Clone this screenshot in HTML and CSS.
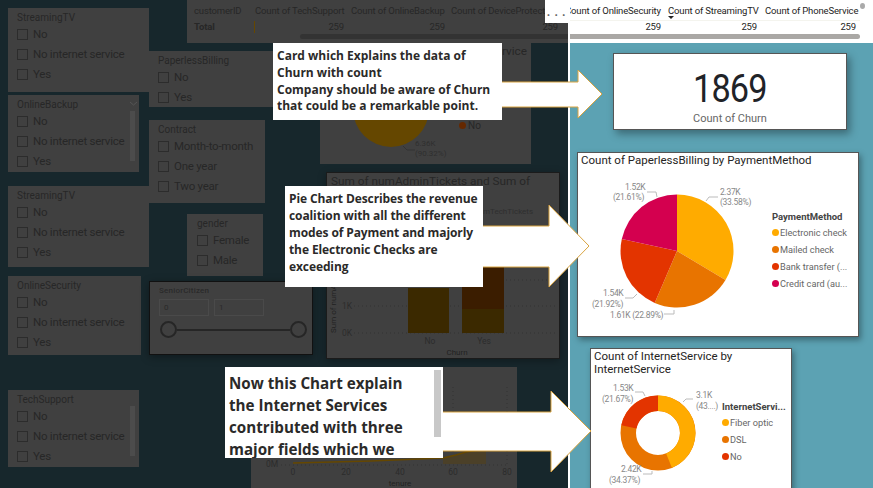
FILE: index.html
```html
<!DOCTYPE html>
<html lang="en">
<head>
<meta charset="utf-8">
<title>Churn dashboard</title>
<link rel="stylesheet" href="styles.css">
</head>
<body>
<div class="canvas">

  <section class="tile slicer s-stream1">
    <h3>StreamingTV</h3>
    <div class="opt"><i></i>No</div><div class="opt"><i></i>No internet service</div><div class="opt"><i></i>Yes</div>
  </section>
  <section class="tile slicer s-backup">
    <h3>OnlineBackup</h3>
    <svg class="chev" width="9" height="5" viewBox="0 0 9 5"><path d="M1 1l3.500 3L8 1" fill="none" stroke="#555"/></svg>
    <div class="opt"><i></i>No</div><div class="opt"><i></i>No internet service</div><div class="opt"><i></i>Yes</div>
    <b class="sbar"></b>
  </section>
  <section class="tile slicer s-stream2">
    <h3>StreamingTV</h3>
    <div class="opt"><i></i>No</div><div class="opt"><i></i>No internet service</div><div class="opt"><i></i>Yes</div>
  </section>
  <section class="tile slicer s-security">
    <h3>OnlineSecurity</h3>
    <div class="opt"><i></i>No</div><div class="opt"><i></i>No internet service</div><div class="opt"><i></i>Yes</div>
  </section>
  <section class="tile slicer s-support">
    <h3>TechSupport</h3>
    <div class="opt"><i></i>No</div><div class="opt"><i></i>No internet service</div><div class="opt"><i></i>Yes</div>
    <b class="sbar"></b>
  </section>
  <section class="tile slicer s-paperless">
    <h3>PaperlessBilling</h3>
    <div class="opt"><i></i>No</div><div class="opt"><i></i>Yes</div>
  </section>
  <section class="tile slicer s-contract">
    <h3>Contract</h3>
    <div class="opt"><i></i>Month-to-month</div><div class="opt"><i></i>One year</div><div class="opt"><i></i>Two year</div>
  </section>
  <section class="tile slicer s-gender">
    <h3>gender</h3>
    <div class="opt"><i></i>Female</div><div class="opt"><i></i>Male</div>
  </section>

  <section class="tile s-senior">
    <h4>SeniorCitizen</h4>
    <div class="inputs"><span>0</span><span>1</span></div>
    <div class="track"><u></u><s></s><u></u></div>
  </section>

  <section class="tile table-dark">
    <div class="hrow">
      <span class="c0">customerID</span><span class="c1">Count of TechSupport</span><span class="c2">Count of OnlineBackup</span><span class="c3">Count of DeviceProtect</span>
    </div>
    <div class="trow">
      <strong class="c0">Total</strong><span class="c1 num">259</span><span class="c2 num">259</span><span class="c3 num">259</span>
    </div>
    <b class="hscroll-dark"></b>
  </section>
  <div class="more">. . .</div>

  <section class="tile s-donutdark">
    <h2>rvice</h2>
    <svg class="darkpie" width="80" height="40" viewBox="0 0 80 40"><circle cx="40" cy="-1" r="38" fill="#654700"/></svg>
    <span class="darkdot"></span><span class="darkno">No</span>
    <span class="darklabel">6.36K<br>(90.32%)</span>
    <svg class="darklead" width="12" height="5" viewBox="0 0 12 5"><path d="M0 0l4 4h8" fill="none" stroke="#333"/></svg>
  </section>

  <section class="tile s-sum">
    <h2>Sum of numAdminTickets and Sum of</h2>
    <span class="sum-legend">mTechTickets</span>
    <svg class="sum-plot" width="232" height="186" viewBox="0 0 232 186">
      <path d="M27 107H228M27 133H228M27 160H228" stroke="#333" stroke-dasharray="1 3"/>
      <rect x="81" y="115" width="41" height="45" fill="#3b2900"/>
      <rect x="135" y="136" width="42" height="24" fill="#3b2900"/>
      <rect x="135" y="94" width="42" height="42" fill="#3b1d00"/>
      <g class="ax">
        <text x="20" y="136" text-anchor="middle">1K</text>
        <text x="20" y="163" text-anchor="middle">0K</text>
        <text x="103" y="171" text-anchor="middle">No</text>
        <text x="157" y="171" text-anchor="middle">Yes</text>
      </g>
      <text class="ax-t" x="130" y="182" text-anchor="middle">Churn</text>
      <text class="ax-t" transform="translate(9 160) rotate(-90)">Sum of numA</text>
    </svg>
  </section>

  <section class="tile s-line">
    <svg width="266" height="121" viewBox="0 0 266 121">
      <path d="M202 20V98M256 20V98M30 98H256" stroke="#333" stroke-dasharray="1 3"/>
      <path d="M192 91L205 88L215 85L235 82V97H192Z" fill="#4b4028"/>
      <path d="M42 96L120 94L192 91L205 88L215 85L235 82" fill="none" stroke="#654700" stroke-width="1.500"/>
      <g class="ax">
        <text x="21" y="100" text-anchor="middle">0M</text>
        <text x="42" y="108" text-anchor="middle">0</text>
        <text x="95" y="108" text-anchor="middle">20</text>
        <text x="149" y="108" text-anchor="middle">40</text>
        <text x="202" y="108" text-anchor="middle">60</text>
        <text x="256" y="108" text-anchor="middle">80</text>
      </g>
      <text class="ax-t" x="149" y="119" text-anchor="middle">tenure</text>
    </svg>
  </section>

  <div class="divider"></div>
  <div class="teal"></div>

  <section class="table-light">
    <div class="hrow">
      <span class="d1">Count of OnlineSecurity</span><span class="d2">Count of StreamingTV</span><span class="d3">Count of PhoneService</span>
    </div>
    <div class="caret"></div>
    <div class="trow">
      <span class="d1 num">259</span><span class="d2 num">259</span><span class="d3 num">259</span>
    </div>
    <b class="hscroll-light"></b>
    <b class="dot"></b>
  </section>

  <section class="card">
    <div class="bignum">1869</div>
    <div class="biglabel">Count of Churn</div>
  </section>

  <section class="viz v-pie">
    <h2>Count of PaperlessBilling by PaymentMethod</h2>
    <svg class="plot" width="280" height="183" viewBox="0 0 280 183">
      <g transform="translate(99 98)">
        <path d="M0 0V-56.500A56.500 56.500 0 0 1 48.500 29Z" fill="#ffab00"/>
        <path d="M0 0L48.500 29A56.500 56.500 0 0 1 -22.300 51.900Z" fill="#e87400"/>
        <path d="M0 0L-22.300 51.900A56.500 56.500 0 0 1 -55.200 -11.900Z" fill="#e33400"/>
        <path d="M0 0L-55.200 -11.900A56.500 56.500 0 0 1 0 -56.500Z" fill="#d4004f"/>
      </g>
      <path d="M128 48l3-4h9M69 39h9l1 5M47 145h8l4-4M86 161h10v-4" fill="none" stroke="#bbb"/>
      <g class="lbl">
        <text x="142" y="42">2.37K</text><text x="142" y="52">(33.58%)</text>
        <text x="47" y="37">1.52K</text><text x="35" y="47">(21.61%)</text>
        <text x="25" y="143">1.54K</text><text x="14" y="154">(21.92%)</text>
        <text x="32" y="165">1.61K (22.89%)</text>
      </g>
    </svg>
    <div class="legend lg-pie">
      <strong>PaymentMethod</strong>
      <span><em class="c-a"></em>Electronic check</span>
      <span><em class="c-b"></em>Mailed check</span>
      <span><em class="c-c"></em>Bank transfer (...</span>
      <span><em class="c-d"></em>Credit card (au...</span>
    </div>
  </section>

  <section class="viz v-donut">
    <h2>Count of InternetService by<br>InternetService</h2>
    <svg class="plot" width="200" height="140" viewBox="0 0 200 140">
      <g transform="translate(67 84)" fill="none" stroke-width="15.500">
        <circle r="29.750" stroke="#e87400"/>
        <path d="M0 -29.750A29.750 29.750 0 0 1 11 27.600" stroke="#ffab00"/>
        <path d="M-29.100 -6.200A29.750 29.750 0 0 1 0 -29.750" stroke="#e33400"/>
      </g>
      <path d="M92 53l3-3h7M44 43h8l2 4M52 125h9v-3" fill="none" stroke="#bbb"/>
      <g class="lbl">
        <text x="105" y="49">3.1K</text><text x="105" y="60">(43....)</text>
        <text x="22" y="42">1.53K</text><text x="11" y="53">(21.67%)</text>
        <text x="30" y="123">2.42K</text><text x="18" y="134">(34.37%)</text>
      </g>
    </svg>
    <div class="legend lg-donut">
      <strong>InternetServi...</strong>
      <span><em class="c-a"></em>Fiber optic</span>
      <span><em class="c-b"></em>DSL</span>
      <span><em class="c-c"></em>No</span>
    </div>
  </section>

  <svg class="arrows" width="873" height="488" viewBox="0 0 873 488">
    <g fill="#fff" stroke="#d9a441">
      <path d="M498 82H578V70L602 94L578 118V107H498"/>
      <path d="M480 226H549V205L589 246L549 287V267H480"/>
      <path d="M440 412H551V391L591 431L551 472V451H440"/>
    </g>
  </svg>

  <aside class="note n1">Card which Explains the data of<br>Churn with count<br>Company should be aware of Churn<br>that could be a remarkable point.</aside>
  <aside class="note n2">Pie Chart Describes the revenue<br>coalition with all the different<br>modes of Payment and majorly<br>the Electronic Checks are<br>exceeding</aside>
  <aside class="note n3">Now this Chart explain<br>the Internet Services<br>contributed with three<br>major fields which we<b class="nbar"></b></aside>
</div>
</body>
</html>
```

FILE: styles.css
```css
* { box-sizing: border-box; }
html, body { margin: 0; padding: 0; background: #17272c; }
.canvas {
  position: relative;
  width: 873px;
  height: 488px;
  overflow: hidden;
  background: #17272c;
  font-family: Roboto, "Liberation Sans", sans-serif;
  color: #252423;
}
.tile { position: absolute; background: #404040; color: #272727; }
h2, h3, h4 { margin: 0; font-weight: 400; }

/* slicers */
.slicer { padding: 4px 9px 0; display: flex; flex-direction: column; }
.slicer h3 { font-size: 10px; line-height: 12px; }
.opt { height: 20px; display: flex; align-items: center; gap: 5px; font-size: 11.500px; letter-spacing: -.25px; white-space: nowrap; }
.opt i { width: 11px; height: 11px; border: 1px solid #2c2c2c; flex: none; }
.chev { position: absolute; left: 121px; top: 6px; }
.sbar { position: absolute; left: 122px; top: 16px; width: 5px; height: 50px; background: #4c4c4c; }
.s-stream1 { left: 8px; top: 8px; width: 141px; height: 84px; }
.s-backup { left: 8px; top: 95px; width: 131px; height: 77px; }
.s-stream2 { left: 8px; top: 186px; width: 141px; height: 81px; }
.s-security { left: 8px; top: 276px; width: 133px; height: 79px; }
.s-support { left: 8px; top: 390px; width: 131px; height: 77px; }
.s-paperless { left: 149px; top: 51px; width: 130px; height: 56px; }
.s-contract { left: 149px; top: 120px; width: 116px; height: 83px; }
.s-gender { left: 187px; top: 214px; width: 76px; height: 62px; padding-left: 10px; }

/* range slicer */
.s-senior { left: 149px; top: 281px; width: 164px; height: 74px; border: 1px solid #111; padding: 4px 9px; box-shadow: 0 2px 8px rgba(0,0,0,.35); }
.s-senior h4 { font-size: 8px; line-height: 10px; letter-spacing: .2px; color: #2a2a2a; font-weight: 500; }
.inputs { display: flex; gap: 5px; margin-top: 3px; }
.inputs span { width: 50px; height: 17px; border: 1px solid #4a4a4a; font-size: 8px; line-height: 15px; padding-left: 4px; color: #2a2a2a; }
.track { display: flex; align-items: center; margin: 5px -4px 0 1px; }
.track u { width: 17px; height: 17px; border: 2px solid #262626; border-radius: 50%; flex: none; }
.track s { flex: 1; height: 2px; background: #262626; }

/* top table */
.table-dark { left: 187px; top: 0; width: 381px; height: 43px; font-size: 9.500px; letter-spacing: -.15px; overflow: hidden; }
.hrow { position: absolute; left: 0; top: 5px; height: 12px; line-height: 12px; width: 100%; }
.trow { position: absolute; left: 0; top: 21px; height: 12px; line-height: 12px; width: 100%; }
.hrow span, .trow span, .trow strong { position: absolute; top: 0; white-space: nowrap; }
.c0 { left: 7px; }
.hrow .c1 { left: 68px; }
.hrow .c2 { left: 164px; }
.hrow .c3 { left: 264px; }
.trow .c1 { left: 131px; width: 26px; }
.trow .c2 { left: 232px; width: 26px; }
.trow .c3 { left: 345px; width: 26px; }
.num { text-align: right; }
.trow strong { font-weight: 700; }
.table-dark .trow::after { content: ""; position: absolute; left: 67px; top: 0; width: 1px; height: 12px; background: #654700; }
.hscroll-dark { position: absolute; left: 113px; top: 34px; width: 268px; height: 5px; background: #333; border-radius: 3px 0 0 3px; }
.more { position: absolute; left: 545px; top: 0; width: 23px; height: 23px; background: #fff; color: #666; font-size: 12px; font-weight: 700; line-height: 25px; text-align: center; letter-spacing: .6px; overflow: hidden; }

/* dim charts */
.s-donutdark { left: 320px; top: 43px; width: 211px; height: 121px; overflow: hidden; }
.s-donutdark h2 { position: absolute; right: 4px; top: 0; font-size: 11.800px; line-height: 16px; white-space: nowrap; }
.darkpie { position: absolute; left: 31px; top: 67px; }
.darkdot { position: absolute; left: 139px; top: 79px; width: 7px; height: 7px; border-radius: 50%; background: #652800; }
.darkno { position: absolute; left: 148px; top: 77px; font-size: 10px; line-height: 11px; }
.darklabel { position: absolute; left: 95px; top: 96px; font-size: 8px; line-height: 10px; color: #2f2f2f; }
.darklead { position: absolute; left: 83px; top: 103px; }
.s-sum { left: 326px; top: 172px; width: 234px; height: 187px; border: 1px solid #1b1b1b; box-shadow: 0 2px 8px rgba(0,0,0,.3); overflow: hidden; }
.s-sum h2 { position: absolute; left: 4px; top: 0; font-size: 11.800px; line-height: 16px; white-space: nowrap; }
.sum-legend { position: absolute; left: 156px; top: 33px; font-size: 8px; line-height: 12px; color: #2f2f2f; }
.sum-plot { position: absolute; left: 0; top: 0; }
.s-line { left: 251px; top: 367px; width: 266px; height: 121px; }
.s-line svg { display: block; }
.ax text { font: 8.500px Roboto, sans-serif; fill: #2c2c2c; }
.ax-t { font: 8px Roboto, sans-serif; fill: #222; }

/* right half */
.divider { position: absolute; left: 568px; top: 0; width: 2px; height: 488px; background: #fff; }
.teal { position: absolute; left: 570px; top: 43px; width: 303px; height: 445px; background: #5ca2b3; }
.table-light { position: absolute; left: 570px; top: 0; width: 303px; height: 43px; background: #fff; font-size: 9.500px; letter-spacing: -.15px; color: #252423; overflow: hidden; }
.table-light .hrow span { top: 0; }
.hrow .d1 { left: -5px; }
.hrow .d2 { left: 98px; }
.hrow .d3 { left: 195px; }
.trow .d1 { left: 65px; width: 26px; }
.trow .d2 { left: 161px; width: 26px; }
.trow .d3 { left: 260px; width: 26px; }
.caret { position: absolute; left: 98px; top: 16px; border: 3px solid transparent; border-top: 3px solid #252423; border-bottom: 0; }
.table-light .trow::before { content: ""; position: absolute; left: 0; top: -1px; width: 290px; height: 1px; background: #f4f4ee; }
.hscroll-light { position: absolute; left: 0; top: 34px; width: 290px; height: 5px; background: #aaa8a5; border-radius: 0 3px 3px 0; }
.dot { position: absolute; left: 290px; top: 3px; width: 5px; height: 6px; border-radius: 50%; background: #aaa; }

.card {
  position: absolute; left: 613px; top: 53px; width: 234px; height: 77px;
  background: #fff; border: 1px solid #555; box-shadow: 3px 4px 8px rgba(0,0,0,.35);
  display: flex; flex-direction: column; align-items: center;
}
.bignum { margin-top: 15px; font-size: 39px; line-height: 40px; font-weight: 400; color: #1f2328; letter-spacing: -1px; transform: scaleX(.88); }
.biglabel { margin-top: 2px; font-size: 11px; line-height: 15px; color: #666; }

.viz { position: absolute; background: #fff; border: 1px solid #555; box-shadow: 2px 3px 6px rgba(0,0,0,.35); }
.viz h2 { position: absolute; left: 3px; top: 0; font-size: 11.500px; line-height: 13px; padding-top: 1px; color: #252423; white-space: nowrap; }
.v-pie { left: 577px; top: 152px; width: 282px; height: 185px; }
.v-donut { left: 590px; top: 348px; width: 202px; height: 150px; }
.plot { position: absolute; left: 0; top: 0; }
.lbl text { font: 8.500px Roboto, sans-serif; letter-spacing: -.3px; fill: #888; }
.legend { position: absolute; display: flex; flex-direction: column; font-size: 9.200px; color: #666; white-space: nowrap; }
.legend strong { color: #444; font-size: 9.500px; line-height: 12px; margin-bottom: 1px; }
.legend span { display: flex; align-items: center; gap: 1px; height: 17px; }
.legend em { width: 7px; height: 7px; border-radius: 50%; flex: none; }
.lg-pie { left: 194px; top: 58px; }
.lg-donut { left: 131px; top: 52px; }
.c-a { background: #ffab00; }
.c-b { background: #e87400; }
.c-c { background: #e33400; }
.c-d { background: #d4004f; }

/* annotations */
.arrows { position: absolute; left: 0; top: 0; }
.note { position: absolute; background: #fff; color: #2b2a29; font-family: "Open Sans", "Noto Sans", sans-serif; font-weight: 700; overflow: hidden; white-space: nowrap; }
.n1 { left: 273px; top: 43px; width: 229px; height: 77px; padding: 5px 4px; font-size: 12px; line-height: 16.800px; }
.n2 { left: 285px; top: 186px; width: 198px; height: 101px; padding: 4px 4px; font-size: 12px; line-height: 17px; letter-spacing: -.1px; }
.n3 { left: 225px; top: 367px; width: 218px; height: 91px; padding: 5px 4px; font-size: 15.200px; line-height: 22px; }
.nbar { position: absolute; left: 209px; top: 3px; width: 7px; height: 67px; background: #c8c8c8; }
```
